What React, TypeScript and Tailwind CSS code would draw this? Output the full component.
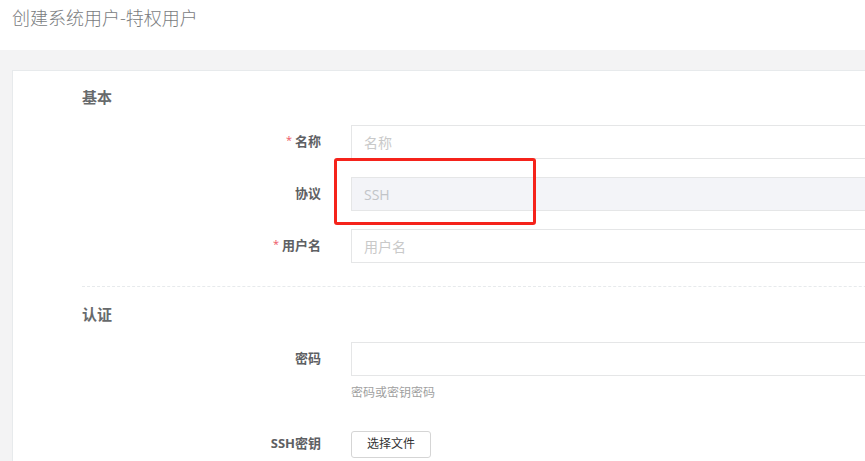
import React from "react";

const font = { fontFamily: '"Open Sans", "Noto Sans CJK SC", sans-serif' };

const Row = ({
  label,
  required,
  children,
  className = "",
}: {
  label: string;
  required?: boolean;
  children: React.ReactNode;
  className?: string;
}) => (
  <div className={`flex items-center ${className}`}>
    <label className="w-[239px] text-right text-[13px] font-bold text-[#5e6063]">
      {required && <span className="text-[#ed5565] font-normal text-[11px] mr-[3px] align-top">*</span>}
      {label}
    </label>
    <div className="ml-[30px] flex-1">{children}</div>
  </div>
);

export default function App() {
  return (
    <div className="w-[865px] h-[461px] overflow-hidden bg-[#f3f3f4]" style={font}>
      {/* page heading */}
      <div className="h-[50px] bg-white px-[12px] pt-[6px]">
        <h2 className="text-[18px] leading-[24px] font-light text-[#7a7c7e]">创建系统用户-特权用户</h2>
      </div>

      <div className="pl-[12px] pt-[20px]">
        <div className="relative w-[960px] bg-white border-t border-l border-[#e7eaec] pl-[69px] pt-[16px] pb-[20px]">
          <h3 className="text-[15px] leading-[20px] font-bold text-[#676a6c]">基本</h3>

          <Row label="名称" required className="mt-[18px]">
            <input
              placeholder="名称"
              className="w-full h-[34px] border border-[#e5e6e7] px-[12px] text-[14px] placeholder:text-[#c9c9c9] outline-none"
            />
          </Row>
          <Row label="协议" className="mt-[18px]">
            <input
              value="SSH"
              readOnly
              disabled
              className="w-full h-[34px] border border-[#e5e6e7] bg-[#f3f4f8] px-[12px] text-[14px] text-[#c2c4c8] outline-none"
            />
          </Row>
          <Row label="用户名" required className="mt-[18px]">
            <input
              placeholder="用户名"
              className="w-full h-[34px] border border-[#e5e6e7] px-[12px] text-[14px] placeholder:text-[#c9c9c9] outline-none"
            />
          </Row>

          <div className="mt-[23px] border-t border-dashed border-[#e7eaec]" />

          <h3 className="mt-[17px] text-[15px] leading-[20px] font-bold text-[#676a6c]">认证</h3>

          <Row label="密码" className="mt-[18px]">
            <input className="w-full h-[34px] border border-[#e5e6e7] px-[12px] text-[14px] outline-none" />
          </Row>
          <div className="ml-[269px] mt-[8px] text-[12px] leading-[17px] text-[#a0a0a0]">密码或密钥密码</div>

          <Row label="SSH密钥" className="mt-[29px]">
            <button className="w-[80px] h-[27px] border border-[#d5d5d5] rounded-[3px] bg-white text-[12px] text-[#333]">
              选择文件
            </button>
          </Row>

          {/* annotation box */}
          <div className="absolute left-[321px] top-[87px] w-[202px] h-[67px] border-[3px] border-[#f5231b] rounded-[3px]" />
        </div>
      </div>
    </div>
  );
}
